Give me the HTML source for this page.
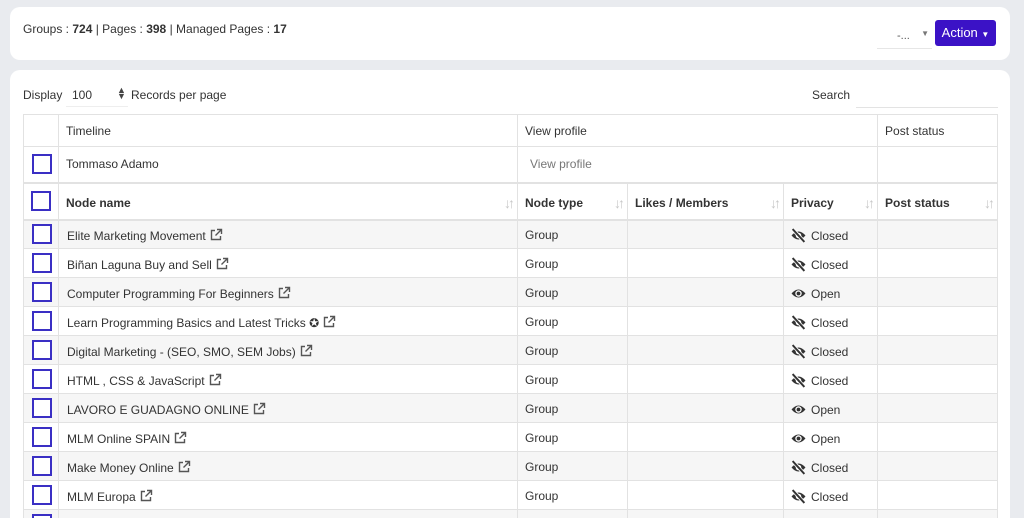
<!DOCTYPE html>
<html style="overflow:hidden;height:518px"><head><meta charset="utf-8"><style>
*{box-sizing:border-box;margin:0;padding:0}
body{width:1024px;height:518px;overflow:hidden;background:#e9ebef;font-family:"Liberation Sans",Arial,sans-serif;color:#333;font-size:12px;position:relative}
.card{position:absolute;background:#fff;border-radius:10px}
.cb{display:inline-block;width:20px;height:20px;border:2px solid #3a2fc4;background:#fff;vertical-align:middle}
table{position:absolute;left:23px;top:114px;border-collapse:collapse;table-layout:fixed;width:974px}
td{border:1px solid #e2e2e2;padding:0 7px;white-space:nowrap;overflow:hidden;position:relative;vertical-align:middle;line-height:14px}
tr.d td{height:29px;padding-top:2px}
tr.d td.c{padding-top:0}
tr.d:nth-child(even) td{background:#f6f6f6}
td.c{padding:0;text-align:center}
.h td{font-weight:bold;height:37px;border-bottom:2px solid #e2e2e2;border-top:2px solid #e2e2e2;padding-top:4px}
.h td.c{padding-top:0}
.s{position:absolute;right:5px;top:12px;color:#c8c8c8;font-size:14px;font-weight:bold;letter-spacing:-3px}
.ext{display:inline-block;vertical-align:-2px;margin-left:3px}
.ico{display:inline-block;vertical-align:-3px;margin-right:5px}
</style></head><body>
<div class="card" style="left:10px;top:7px;width:1000px;height:53px">
 <div style="position:absolute;left:13px;top:15px">Groups : <b>724</b> | Pages : <b>398</b> | Managed Pages : <b>17</b></div>
 <div style="position:absolute;left:867px;top:17px;width:55px;height:25px;border-bottom:1px solid #e6e6e6;font-size:11px;color:#555;padding-left:20px;padding-top:6px">-... <span style="position:absolute;right:3px;top:5px;font-size:8px;color:#777">▼</span></div>
 <div style="position:absolute;left:925px;top:13px;width:61px;height:26px;background:#3b12c6;border-radius:3px;color:#fff;font-size:13px;line-height:26px;text-align:center">Action <span style="font-size:8px">▼</span></div>
</div>
<div class="card" style="left:10px;top:70px;width:1000px;height:470px">
 <div style="position:absolute;left:13px;top:18px">Display</div>
 <div style="position:absolute;left:56px;top:10px;width:62px;height:27px;border-bottom:1px solid #eee;padding:8px 0 0 6px">100</div>
 <div style="position:absolute;left:107px;top:17px;font-size:9px;color:#444;line-height:6px">▲<br>▼</div>
 <div style="position:absolute;left:121px;top:18px">Records per page</div>
 <div style="position:absolute;left:802px;top:18px">Search</div>
 <div style="position:absolute;left:846px;top:37px;width:142px;border-bottom:1px solid #e3e3e3"></div>
</div>
<table>
<colgroup><col style="width:35px"><col style="width:459px"><col style="width:110px"><col style="width:156px"><col style="width:94px"><col style="width:120px"></colgroup>
<tr><td style="height:32px"></td><td>Timeline</td><td colspan="3">View profile</td><td>Post status</td></tr>
<tr><td class="c" style="height:36px;padding-left:1px"><span class="cb"></span></td><td>Tommaso Adamo</td><td colspan="3" style="color:#777;padding-left:12px">View profile</td><td></td></tr>
<tr class="h"><td class="c"><span class="cb"></span></td><td>Node name<span class="s">↓↑</span></td><td>Node type<span class="s">↓↑</span></td><td>Likes / Members<span class="s">↓↑</span></td><td>Privacy<span class="s">↓↑</span></td><td>Post status<span class="s">↓↑</span></td></tr>
</table>
<svg width="0" height="0" style="position:absolute"><defs>
<symbol id="x" viewBox="0 0 14 14"><path d="M6 2.5H2.5v9h9V8" fill="none" stroke="#555" stroke-width="1.4"/><path d="M8 1.5h4.5V6M12.5 1.5L6.5 7.5" fill="none" stroke="#555" stroke-width="1.4"/></symbol>
<symbol id="o" viewBox="0 0 14 14"><path d="M0.5 7Q7 -0.5 13.5 7Q7 14.5 0.5 7Z" fill="#333"/><circle cx="7" cy="7" r="3" fill="#fff"/><circle cx="7" cy="7" r="1.8" fill="#333"/></symbol>
<symbol id="c" viewBox="0 0 14 14"><path d="M0.5 7Q7 -0.5 13.5 7Q7 14.5 0.5 7Z" fill="#333"/><circle cx="7" cy="7" r="2.6" fill="#fff"/><path d="M1.5 1L12.5 13" stroke="#fff" stroke-width="3.4"/><path d="M1.5 1L12.5 13" stroke="#333" stroke-width="1.8"/></symbol>
</defs></svg>
<script>
var rows=[["Elite Marketing Movement",0],["Biñan Laguna Buy and Sell",0],["Computer Programming For Beginners",1],["Learn Programming Basics and Latest Tricks ✪",0],["Digital Marketing - (SEO, SMO, SEM Jobs)",0],["HTML , CSS &amp; JavaScript",0],["LAVORO E GUADAGNO ONLINE",1],["MLM Online SPAIN",1],["Make Money Online",0],["MLM Europa",0],["MLM Network",0]];
var t=document.querySelector('table tbody')||document.querySelector('table'),h='';
rows.forEach(function(r){h+='<tr class="d"><td class="c" style="padding-left:2px"><span class="cb"></span></td><td style="padding-left:8px">'+r[0]+'<svg class="ext" width="14" height="14"><use href="#x"/></svg></td><td>Group</td><td></td><td><svg class="ico" width="15" height="15"><use href="#'+(r[1]?'o':'c')+'"/></svg>'+(r[1]?'Open':'Closed')+'</td><td></td></tr>';});
t.insertAdjacentHTML('beforeend',h);
</script>
</body></html>
